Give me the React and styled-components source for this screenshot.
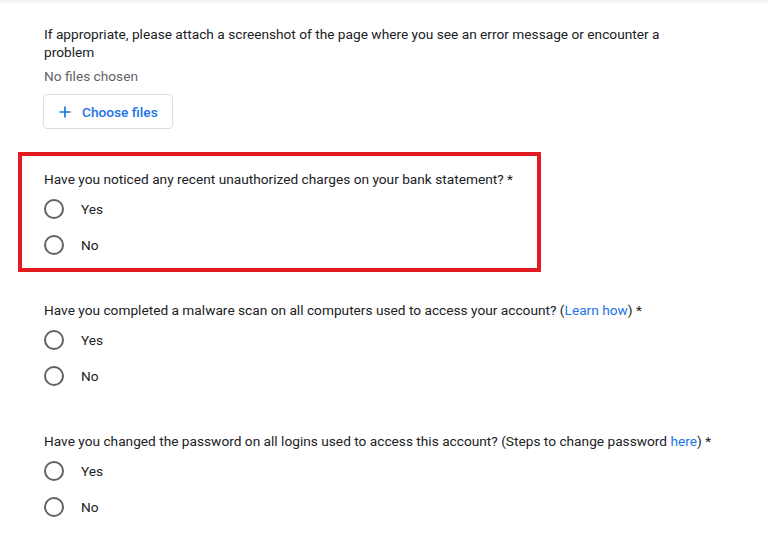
import React from 'react'
import styled, { createGlobalStyle } from 'styled-components'

const GlobalStyle = createGlobalStyle`
  html, body {
    margin: 0;
    padding: 0;
    background: #fff;
  }
  body {
    font-family: Roboto, "Noto Sans", Arial, sans-serif;
    color: #202124;
    -webkit-font-smoothing: antialiased;
  }
`

const Page = styled.div`
  width: 768px;
  min-height: 538px;
  background: #fff;
`

const TopShade = styled.div`
  height: 4px;
  background: linear-gradient(to bottom, rgba(0, 0, 0, 0.07), rgba(0, 0, 0, 0));
`

const Upload = styled.section`
  padding: 21px 0 0 44px;
  width: 640px;
`

const Label = styled.div`
  font-size: 13.7px;
  line-height: 18px;
  color: #202124;
`

const Hint = styled.div`
  margin-top: 6px;
  font-size: 13.7px;
  line-height: 18px;
  color: #5f6368;
`

const FileButton = styled.button`
  margin: 9px 0 0 -1px;
  height: 35px;
  box-sizing: border-box;
  display: inline-flex;
  align-items: center;
  gap: 11px;
  padding: 0 14px 0 15px;
  border: 1px solid #dadce0;
  border-radius: 4px;
  background: #fff;
  color: #1a73e8;
  font-family: inherit;
  font-size: 13.7px;
  font-weight: 500;
  cursor: pointer;
`

const Questions = styled.div`
  margin-top: 23px;
  padding-left: 18px;
  display: flex;
  flex-direction: column;
  gap: 11px;
`

const Question = styled.fieldset`
  margin: 0;
  width: 523px;
  box-sizing: border-box;
  padding: 14px 0 5px 22px;
  border: 4px solid ${p => (p.$highlight ? '#e31b23' : 'transparent')};
  min-width: 0;
`

const QuestionText = styled.div`
  font-size: 13.7px;
  line-height: 18px;
  white-space: nowrap;
`

const Link = styled.a`
  color: #1a73e8;
  text-decoration: none;
`

const Options = styled.div`
  margin-top: 3px;
  display: flex;
  flex-direction: column;
`

const Option = styled.label`
  height: 36px;
  display: flex;
  align-items: center;
  gap: 17px;
  font-size: 13.7px;
  cursor: pointer;
`

const Radio = styled.span`
  width: 20px;
  height: 20px;
  box-sizing: border-box;
  border: 2px solid #5f6368;
  border-radius: 50%;
  flex: none;
`

const PlusIcon = () => (
  <svg width="12" height="12" viewBox="0 0 12 12" aria-hidden="true">
    <path d="M6 0.5v11M0.5 6h11" stroke="#1a73e8" strokeWidth="1.7" fill="none" />
  </svg>
)

const questions = [
  {
    id: 'charges',
    highlight: true,
    text: <>Have you noticed any recent unauthorized charges on your bank statement? *</>,
  },
  {
    id: 'malware',
    text: (
      <>
        Have you completed a malware scan on all computers used to access your account? (
        <Link href="#">Learn how</Link>) *
      </>
    ),
  },
  {
    id: 'password',
    text: (
      <>
        Have you changed the password on all logins used to access this account? (Steps to change
        password <Link href="#">here</Link>) *
      </>
    ),
  },
]

export default function App() {
  return (
    <Page>
      <GlobalStyle />
      <TopShade />
      <Upload>
        <Label>
          If appropriate, please attach a screenshot of the page where you see an error message or
          encounter a problem
        </Label>
        <Hint>No files chosen</Hint>
        <FileButton type="button">
          <PlusIcon />
          Choose files
        </FileButton>
      </Upload>
      <Questions>
        {questions.map(q => (
          <Question key={q.id} $highlight={q.highlight}>
            <QuestionText>{q.text}</QuestionText>
            <Options>
              {['Yes', 'No'].map(opt => (
                <Option key={opt}>
                  <Radio />
                  {opt}
                </Option>
              ))}
            </Options>
          </Question>
        ))}
      </Questions>
    </Page>
  )
}
